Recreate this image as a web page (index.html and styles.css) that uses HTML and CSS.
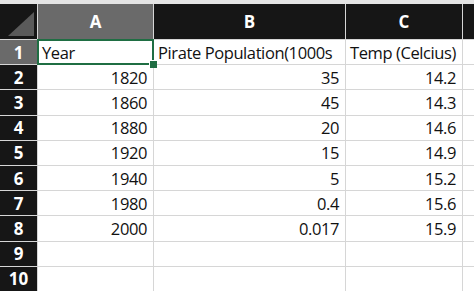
FILE: index.html
```html
<!DOCTYPE html>
<html>
<head>
<meta charset="utf-8">
<link rel="stylesheet" href="styles.css">
</head>
<body>
<div class="strip"></div>
<div class="sheet">
  <div class="corner"><svg width="26" height="24" viewBox="0 0 26 24"><polygon points="26,0 26,24 0,24" fill="#5a5a5a"/></svg></div>
  <div class="colh sel">A</div>
  <div class="colh">B</div>
  <div class="colh">C</div>
  <div class="colh"></div>

  <div class="rowh sel">1</div>
  <div class="cell active">Year</div>
  <div class="cell">Pirate Population(1000s</div>
  <div class="cell">Temp (Celcius)</div>
  <div class="cell"></div>

  <div class="rowh">2</div><div class="cell num">1820</div><div class="cell num">35</div><div class="cell num">14.2</div><div class="cell"></div>
  <div class="rowh">3</div><div class="cell num">1860</div><div class="cell num">45</div><div class="cell num">14.3</div><div class="cell"></div>
  <div class="rowh">4</div><div class="cell num">1880</div><div class="cell num">20</div><div class="cell num">14.6</div><div class="cell"></div>
  <div class="rowh">5</div><div class="cell num">1920</div><div class="cell num">15</div><div class="cell num">14.9</div><div class="cell"></div>
  <div class="rowh">6</div><div class="cell num">1940</div><div class="cell num">5</div><div class="cell num">15.2</div><div class="cell"></div>
  <div class="rowh">7</div><div class="cell num">1980</div><div class="cell num">0.4</div><div class="cell num">15.6</div><div class="cell"></div>
  <div class="rowh">8</div><div class="cell num">2000</div><div class="cell num">0.017</div><div class="cell num">15.9</div><div class="cell"></div>
  <div class="rowh">9</div><div class="cell"></div><div class="cell"></div><div class="cell"></div><div class="cell"></div>
  <div class="rowh">10</div><div class="cell"></div><div class="cell"></div><div class="cell"></div><div class="cell"></div>
</div>
</body>
</html>
```
FILE: styles.css
```css
html, body {
  margin: 0;
  padding: 0;
  background: #ffffff;
  overflow: hidden;
}
body {
  width: 474px;
  height: 291px;
  font-family: "Open Sans", "Liberation Sans", sans-serif;
}
.strip {
  height: 4px;
  background: #e4e4e4;
}
.sheet {
  display: grid;
  grid-template-columns: 37px 115px 191px 116px 1fr;
  grid-template-rows: 35px;
  grid-auto-rows: 24.2px;
  gap: 1px;
  background: #d6d6d6;
}
.corner {
  background: #161616;
  display: flex;
  align-items: flex-end;
  justify-content: flex-end;
  padding: 0 3px 3px 0;
}
.corner svg { display: block; }
.colh {
  background: #161616;
  color: #ffffff;
  font-weight: 700;
  font-size: 17px;
  display: flex;
  align-items: center;
  justify-content: center;
}
.colh.sel { background: #6a6a6a; }
.rowh {
  background: #161616;
  color: #ffffff;
  font-weight: 700;
  font-size: 17px;
  display: flex;
  align-items: center;
  justify-content: center;
}
.rowh.sel { background: #6a6a6a; }
.cell {
  background: #ffffff;
  color: #111111;
  font-size: 16.5px;
  letter-spacing: -0.4px;
  display: flex;
  align-items: center;
  padding: 0 6px 0 4px;
  white-space: nowrap;
  overflow: hidden;
  position: relative;
}
.cell.num { justify-content: flex-end; }
.cell.active {
  overflow: visible;
  z-index: 2;
}
.cell.active::before {
  content: "";
  position: absolute;
  left: -1px;
  top: -1px;
  right: -1px;
  bottom: -1px;
  border: 2px solid #1f6e43;
}
.cell.active::after {
  content: "";
  position: absolute;
  right: -4px;
  bottom: -4px;
  width: 7px;
  height: 7px;
  background: #1f6e43;
  border-left: 1px solid #fff;
  border-top: 1px solid #fff;
}
```
